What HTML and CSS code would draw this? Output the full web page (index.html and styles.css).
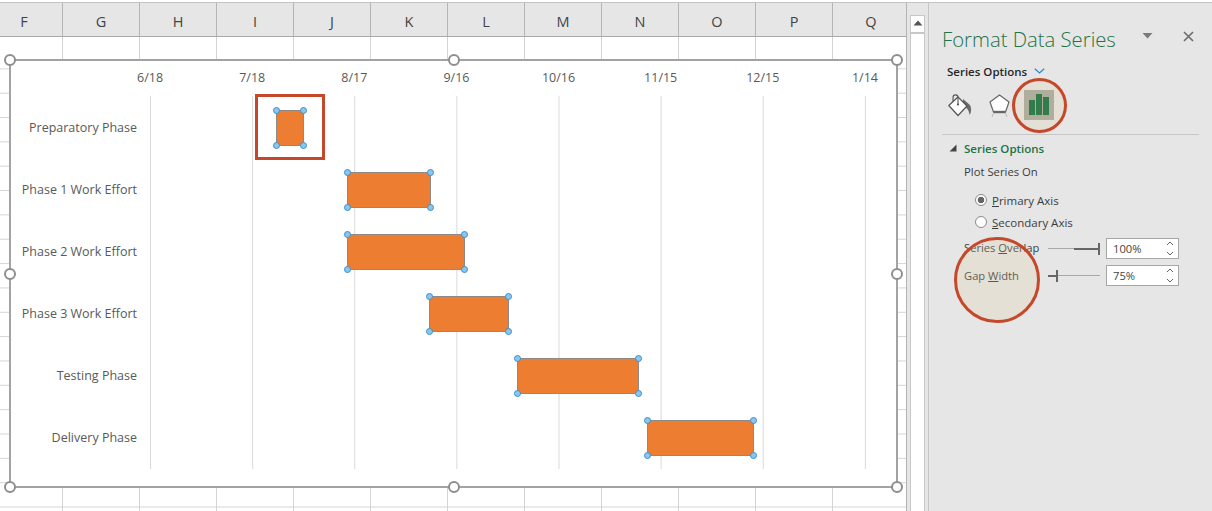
FILE: index.html
```html
<!DOCTYPE html>
<html lang="en">
<head>
<meta charset="utf-8">
<title>Format Data Series</title>
<link rel="stylesheet" href="styles.css">
</head>
<body>
<div class="window">
  <section class="sheet">
    <div class="col-head">
      <span>F</span><span>G</span><span>H</span><span>I</span><span>J</span><span>K</span><span>L</span><span>M</span><span>N</span><span>O</span><span>P</span><span>Q</span>
    </div>
    <div class="cells">
      <div class="chart">
        <div class="axis">
          <span>6/18</span><span>7/18</span><span>8/17</span><span>9/16</span><span>10/16</span><span>11/15</span><span>12/15</span><span>1/14</span>
        </div>
        <div class="plot">
          <div class="row"><div class="row-label">Preparatory Phase</div><div class="track"><div class="bar" style="margin-left:126px;width:28px"><i class="pt tl"></i><i class="pt tr"></i><i class="pt bl"></i><i class="pt br"></i></div></div></div>
          <div class="row"><div class="row-label">Phase 1 Work Effort</div><div class="track"><div class="bar" style="margin-left:197px;width:84px"><i class="pt tl"></i><i class="pt tr"></i><i class="pt bl"></i><i class="pt br"></i></div></div></div>
          <div class="row"><div class="row-label">Phase 2 Work Effort</div><div class="track"><div class="bar" style="margin-left:197px;width:118px"><i class="pt tl"></i><i class="pt tr"></i><i class="pt bl"></i><i class="pt br"></i></div></div></div>
          <div class="row"><div class="row-label">Phase 3 Work Effort</div><div class="track"><div class="bar" style="margin-left:279px;width:80px"><i class="pt tl"></i><i class="pt tr"></i><i class="pt bl"></i><i class="pt br"></i></div></div></div>
          <div class="row"><div class="row-label">Testing Phase</div><div class="track"><div class="bar" style="margin-left:367px;width:122px"><i class="pt tl"></i><i class="pt tr"></i><i class="pt bl"></i><i class="pt br"></i></div></div></div>
          <div class="row"><div class="row-label">Delivery Phase</div><div class="track"><div class="bar" style="margin-left:497px;width:107px"><i class="pt tl"></i><i class="pt tr"></i><i class="pt bl"></i><i class="pt br"></i></div></div></div>
        </div>
        <div class="callout"></div>
        <i class="grip g-tl"></i><i class="grip g-tc"></i><i class="grip g-tr"></i>
        <i class="grip g-ml"></i><i class="grip g-mr"></i>
        <i class="grip g-bl"></i><i class="grip g-bc"></i><i class="grip g-br"></i>
      </div>
    </div>
  </section>

  <div class="scrollbar">
    <div class="scroll-btn"><svg width="10" height="6" viewBox="0 0 10 6"><path d="M5 0.5 9.5 5.5H0.5Z" fill="#555"/></svg></div>
  </div>

  <aside class="pane">
    <header class="pane-head">
      <h1 class="pane-title">Format Data Series</h1>
      <svg class="pane-menu" width="11" height="6" viewBox="0 0 11 6"><path d="M0.5 0H10.5L5.5 5.5Z" fill="#7a7a7a"/></svg>
      <svg class="pane-close" width="11" height="11" viewBox="0 0 11 11"><path d="M1 1 10 10M10 1 1 10" stroke="#6e6e6e" stroke-width="1.7" fill="none"/></svg>
    </header>
    <div class="tab-title">Series Options
      <svg width="11" height="6" viewBox="0 0 11 6"><path d="M0.8 0.8 5.5 5 10.2 0.8" stroke="#2a86d0" stroke-width="1.2" fill="none"/></svg>
    </div>
    <div class="icon-row">
      <svg class="ic-fill" width="24" height="23" viewBox="0 0 24 23">
        <path d="M15 5 22 11C24 15 23 19 21.500 21C21 17 20 14 15 12Z" fill="#6a6a6a"/>
        <path d="M10 3 19 12 10 21.500 0.800 11.500Z" fill="#fff" stroke="#555" stroke-width="1.200" stroke-linejoin="round"/>
        <path d="M5 7V3.500C5 0 10 0 10 3.500V10" fill="none" stroke="#555" stroke-width="1.100"/>
        <circle cx="10" cy="10.500" r="1.100" fill="#555"/>
      </svg>
      <svg class="ic-shape" width="21" height="23" viewBox="0 0 21 23">
        <path d="M10.500 1 20 8 16.500 18H4.500L1 8Z" fill="#fff" stroke="#666" stroke-width="1.200" stroke-linejoin="round"/>
        <path d="M4.500 18H16.500" stroke="#666" stroke-width="2.400"/>
        <path d="M4.500 19 3 23M16.500 19 18 23" stroke="#bbb" stroke-width="1"/>
      </svg>
      <div class="ic-series">
        <svg width="20" height="21" viewBox="0 0 20 21"><path d="M0 6H6V21H0ZM7 0H13V21H7ZM14 3H20V21H14Z" fill="#006632"/></svg>
      </div>
    </div>
    <div class="divider"></div>
    <div class="section-title"><svg width="8" height="8" viewBox="0 0 8 8"><path d="M7.500 0.500V7.500H0.500Z" fill="#444"/></svg><span>Series Options</span></div>
    <div class="field-label">Plot Series On</div>
    <label class="radio first"><i class="dot on"></i><span><u>P</u>rimary Axis</span></label>
    <label class="radio"><i class="dot"></i><span><u>S</u>econdary Axis</span></label>
    <div class="spin-row first">
      <span class="spin-label">Series <u>O</u>verlap</span>
      <span class="slider full"><i></i></span>
      <span class="spin"><span>100%</span><svg width="8" height="17" viewBox="0 0 8 17"><path d="M1 5 4 2 7 5M1 12 4 15 7 12" stroke="#666" fill="none"/></svg></span>
    </div>
    <div class="spin-row">
      <span class="spin-label">Gap <u>W</u>idth</span>
      <span class="slider low"><i></i></span>
      <span class="spin"><span>75%</span><svg width="8" height="17" viewBox="0 0 8 17"><path d="M1 5 4 2 7 5M1 12 4 15 7 12" stroke="#666" fill="none"/></svg></span>
    </div>
    <div class="ring ring-icon"></div>
    <div class="ring ring-gap"></div>
  </aside>
</div>
</body>
</html>
```
FILE: styles.css
```css
* { box-sizing: border-box; }
html, body { margin: 0; height: 100%; background: #fff; overflow: hidden; }
body { padding-top: 2px; font-family: "Open Sans", "DejaVu Sans", sans-serif; }

.window {
  display: flex;
  height: 509px;
  border-top: 1px solid #c4c4c4;
  background: #e6e6e6;
}

/* Worksheet */
.sheet {
  width: 907px;
  flex: none;
  overflow: hidden;
  display: flex;
  flex-direction: column;
  background: #fff;
  border-right: 1px solid #b4b4b4;
}
.col-head {
  height: 34px;
  flex: none;
  display: flex;
  margin-left: -14px;
  background: #e6e6e6;
  border-bottom: 1px solid #a9a9a9;
}
.col-head span {
  flex: 0 0 77px;
  height: 33px;
  line-height: 38px;
  text-align: center;
  font-size: 14.5px;
  color: #444;
  border-right: 1px solid #b5b5b5;
}
.cells {
  position: relative;
  flex: 1;
  background-color: #fff;
  background-image:
    linear-gradient(to right, #d4d4d4 1px, transparent 1px),
    linear-gradient(#fff, #fff),
    linear-gradient(to bottom, #d4d4d4 1px, transparent 1px);
  background-size: 77px 100%, 100% 23px, 100% 24.35px;
  background-position: 62px 0, 0 0, 0 7px;
  background-repeat: repeat, no-repeat, repeat;
}

/* Chart */
.chart {
  position: absolute;
  left: 9px;
  top: 22px;
  width: 889px;
  height: 429px;
  padding-top: 7px;
  background: #fff;
  border: 2px solid #a3a3a3;
}
.axis {
  display: grid;
  grid-template-columns: repeat(8, 102.14px);
  margin-left: 88px;
  height: 20px;
}
.axis span {
  text-align: center;
  font-size: 12.5px;
  line-height: 20px;
  color: #595959;
}
.plot { margin-top: 8px; }
.row { display: flex; height: 62.1px; }
.row-label {
  flex: 0 0 126px;
  text-align: right;
  font-size: 12.5px;
  line-height: 63px;
  color: #595959;
  white-space: nowrap;
}
.track {
  flex: 1;
  margin-left: 13px;
  padding-top: 1px;
  display: flex;
  align-items: center;
  background-image: linear-gradient(to right, #d9d9d9 1px, transparent 1px);
  background-size: 102.14px 100%;
}
.bar {
  position: relative;
  height: 36px;
  background: #ed7d31;
  border: 1px solid #8f8a85;
}
.pt {
  position: absolute;
  width: 7px;
  height: 7px;
  border-radius: 50%;
  background: #8ac6ee;
  border: 1px solid #3c8fca;
}
.tl { left: -4px; top: -4px; }
.tr { right: -4px; top: -4px; }
.bl { left: -4px; bottom: -4px; }
.br { right: -4px; bottom: -4px; }

.callout {
  position: absolute;
  left: 244px;
  top: 33px;
  width: 70px;
  height: 66px;
  border: 3px solid #c5482a;
}
.grip {
  position: absolute;
  width: 12px;
  height: 12px;
  border-radius: 50%;
  background: #fff;
  border: 2px solid #8e8e8e;
}
.g-tl { left: -7px; top: -7px; }
.g-tc { left: calc(50% - 6px); top: -7px; }
.g-tr { right: -7px; top: -7px; }
.g-ml { left: -7px; top: calc(50% - 6px); }
.g-mr { right: -7px; top: calc(50% - 6px); }
.g-bl { left: -7px; bottom: -7px; }
.g-bc { left: calc(50% - 6px); bottom: -7px; }
.g-br { right: -7px; bottom: -7px; }

/* Vertical scrollbar */
.scrollbar {
  width: 22px;
  flex: none;
  padding: 12px 3px 0 3px;
  border-right: 1px solid #c6c6c6;
}
.scroll-btn {
  height: 100%;
  background: #fff;
  border-left: 1px solid #c8c8c8;
  border-right: 1px solid #c8c8c8;
  position: relative;
}
.scroll-btn svg {
  position: absolute;
  left: 2px;
  top: 5px;
}
.scroll-btn::before {
  content: "";
  position: absolute;
  left: -1px;
  right: -1px;
  top: 0;
  height: 16px;
  border: 1px solid #c8c8c8;
  border-bottom-width: 2px;
}

/* Side pane */
.pane {
  position: relative;
  flex: 1;
  padding-left: 13px;
  color: #3c3c3c;
}
.pane-head {
  display: flex;
  align-items: center;
  height: 30px;
  margin-top: 21px;
  position: relative;
}
.pane-title {
  margin: 0;
  font-size: 20.3px;
  font-weight: 300;
  color: #217346;
  white-space: nowrap;
}
.pane-menu { position: absolute; left: 200px; top: 9px; }
.pane-close { position: absolute; left: 241px; top: 7px; }
.tab-title {
  display: flex;
  align-items: center;
  gap: 7px;
  height: 18px;
  margin: 8px 0 0 5px;
  font-size: 11.5px;
  font-weight: 600;
  color: #262626;
}
.icon-row {
  display: flex;
  align-items: center;
  height: 30px;
  margin: 10px 0 0 6px;
}
.ic-shape { margin-left: 17px; }
.ic-series {
  width: 30px;
  height: 30px;
  margin-left: 14px;
  padding: 4px 5px 5px;
  background: #a4a59c;
}
.ic-series svg { display: block; }
.divider {
  width: 257px;
  height: 1px;
  margin-top: 14px;
  background: #c8c8c8;
}
.section-title {
  display: flex;
  align-items: center;
  gap: 7px;
  height: 18px;
  margin: 4px 0 0 7px;
  font-size: 11.5px;
  font-weight: 600;
  color: #217346;
}
.field-label {
  height: 18px;
  line-height: 18px;
  margin: 6px 0 0 22px;
  font-size: 11.3px;
}
.radio {
  display: flex;
  align-items: center;
  gap: 5px;
  height: 18px;
  margin: 4px 0 0 33px;
  font-size: 11.5px;
}
.radio.first { margin-top: 10px; }
.dot {
  width: 12px;
  height: 12px;
  border-radius: 50%;
  background: #fff;
  border: 1px solid #8a8a8a;
}
.dot.on { background: radial-gradient(circle, #666 0 3px, #fff 3.6px); }
.spin-row {
  display: flex;
  align-items: center;
  height: 21px;
  margin: 6px 0 0 22px;
  font-size: 11.2px;
}
.spin-row.first { margin-top: 7px; }
.spin-label { flex: 0 0 84px; white-space: nowrap; }
.spin-row.first .spin-label { padding-bottom: 2px; }
.slider {
  position: relative;
  flex: 0 0 52px;
  height: 1px;
  background: #a8a8a8;
}
.slider i {
  position: absolute;
  top: 0;
  height: 2px;
  background: #666;
}
.slider i::after {
  content: "";
  position: absolute;
  top: -5px;
  right: 0;
  width: 2px;
  height: 12px;
  background: #666;
}
.slider.full i { left: 26px; width: 26px; }
.slider.low i { left: 0; width: 10px; }
.spin {
  display: flex;
  align-items: center;
  justify-content: space-between;
  width: 73px;
  height: 21px;
  margin-left: 6px;
  padding: 0 4px 0 6px;
  background: #fff;
  border: 1px solid #a6a6a6;
  color: #444;
}
.ring {
  position: absolute;
  border-radius: 50%;
  border: 3px solid #c5482a;
  background: rgba(224, 205, 160, 0.22);
}
.ring-icon { left: 83px; top: 75px; width: 55px; height: 55px; }
.ring-gap { left: 25px; top: 234px; width: 86px; height: 86px; }
```
